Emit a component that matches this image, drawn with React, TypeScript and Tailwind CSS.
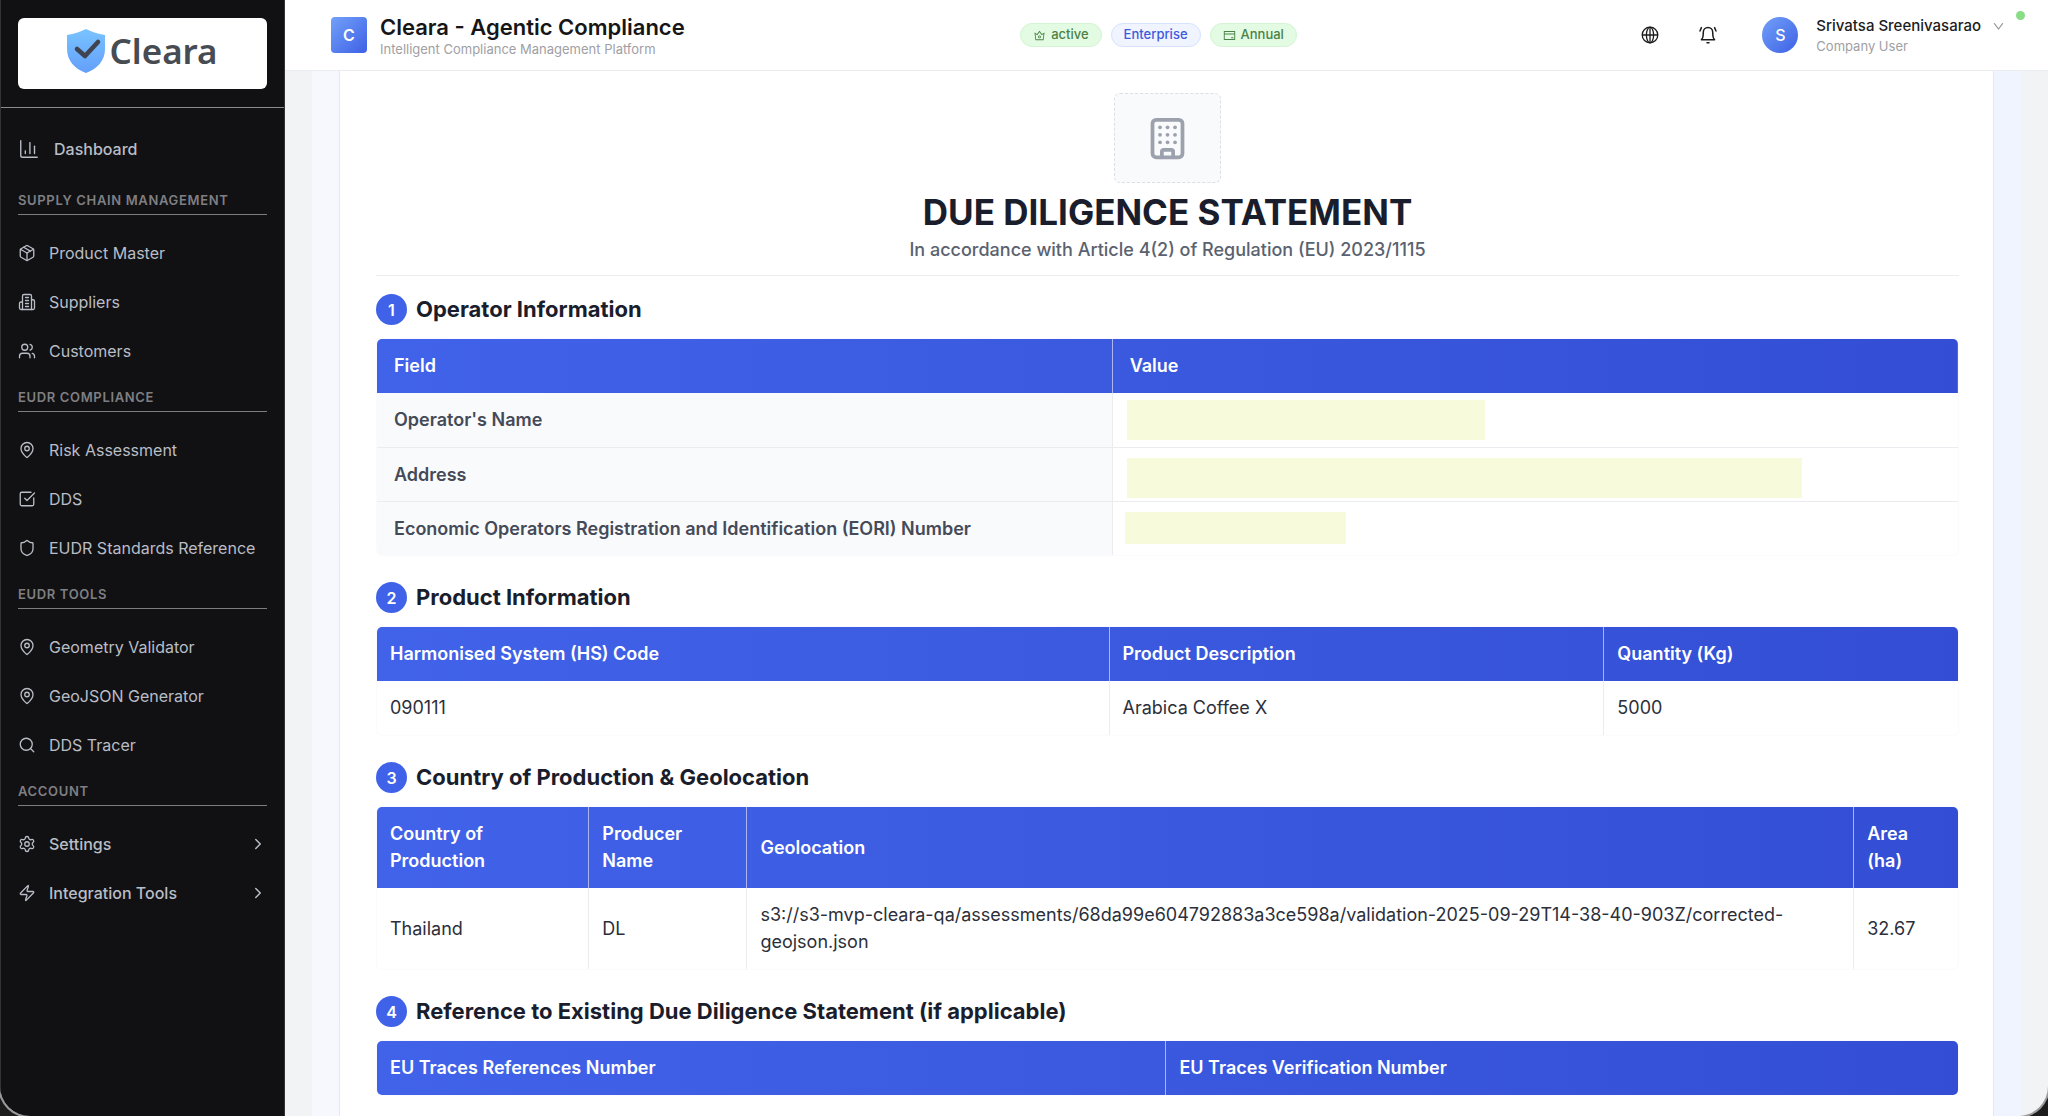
import React, { ReactNode } from 'react';
import {
    Building,
    ChartColumn,
    ChevronRight,
    MapPin,
    Package,
    Search,
    Settings,
    Shield,
    SquareCheckBig,
    Users,
    Zap
} from 'lucide-react';
import { AiOutlineCreditCard, AiOutlineCrown, AiOutlineDown } from 'react-icons/ai';

interface IconProps {
    className?: string;
    strokeWidth?: number | string;
}

interface NavItem {
    label: string;
    icon: React.ComponentType<IconProps>;
    expandable?: boolean;
}

interface NavSection {
    title: string;
    items: NavItem[];
}

// Office tower with two side wings
const OfficeIcon = ({ className, strokeWidth }: IconProps) => (
    <svg
        viewBox="0 0 24 24"
        className={className}
        fill="none"
        stroke="currentColor"
        strokeWidth={strokeWidth}
        strokeLinecap="round"
        strokeLinejoin="round"
        aria-hidden="true"
    >
        <path d="M6 22V4a2 2 0 0 1 2-2h8a2 2 0 0 1 2 2v18Z" />
        <path d="M6 12H4a2 2 0 0 0-2 2v6a2 2 0 0 0 2 2h2" />
        <path d="M18 9h2a2 2 0 0 1 2 2v9a2 2 0 0 1-2 2h-2" />
        <path d="M10 6h4M10 10h4M10 14h4M10 18h4" />
    </svg>
);

const navSections: NavSection[] = [
    {
        title: 'SUPPLY CHAIN MANAGEMENT',
        items: [
            { label: 'Product Master', icon: Package },
            { label: 'Suppliers', icon: OfficeIcon },
            { label: 'Customers', icon: Users }
        ]
    },
    {
        title: 'EUDR COMPLIANCE',
        items: [
            { label: 'Risk Assessment', icon: MapPin },
            { label: 'DDS', icon: SquareCheckBig },
            { label: 'EUDR Standards Reference', icon: Shield }
        ]
    },
    {
        title: 'EUDR TOOLS',
        items: [
            { label: 'Geometry Validator', icon: MapPin },
            { label: 'GeoJSON Generator', icon: MapPin },
            { label: 'DDS Tracer', icon: Search }
        ]
    },
    {
        title: 'ACCOUNT',
        items: [
            { label: 'Settings', icon: Settings, expandable: true },
            { label: 'Integration Tools', icon: Zap, expandable: true }
        ]
    }
];

const Logo = () => (
    <div className="flex h-[71px] items-center justify-center gap-1 rounded-md bg-white pb-[6px]">
        <svg viewBox="0 0 38 44" className="h-11 w-[38px]" aria-hidden="true">
            <defs>
                <linearGradient id="shield" x1="0" y1="0" x2="0" y2="1">
                    <stop offset="0" stopColor="#79c3fe" />
                    <stop offset="1" stopColor="#639ffb" />
                </linearGradient>
            </defs>
            <path d="M19 0 C25 3 31 5 38 6 V20 C38 32 30 40 19 44 C8 40 0 32 0 20 V6 C7 5 13 3 19 0Z" fill="url(#shield)" />
            <path d="M10 20 L18 27 L31 13" fill="none" stroke="#3f4450" strokeWidth="4.6" strokeLinecap="round" strokeLinejoin="round" />
        </svg>
        <span className="font-['Noto_Sans',sans-serif] text-[35px] leading-none font-semibold text-[#474b52]">Cleara</span>
    </div>
);

const Sidebar = () => (
    <aside className="flex w-[285px] shrink-0 flex-col border-x border-[#343437] bg-[#111113] text-[#b9bdc6]">
        <div className="border-b border-[#8b8b8e] px-[17px] py-[18px]">
            <Logo />
        </div>
        <nav className="flex flex-col gap-3 px-[17px] pt-4">
            <a href="#dashboard" className="mb-[5px] flex h-[49px] items-center gap-[14px] text-base font-medium">
                <ChartColumn className="h-[22px] w-[22px]" strokeWidth={1.5} />
                Dashboard
            </a>
            {navSections.map(section => (
                <section key={section.title}>
                    <h2 className="mb-[13px] border-b border-[#7d7d80] pb-1 text-[13px] leading-5 font-semibold tracking-wider text-[#7f7f83]">
                        {section.title}
                    </h2>
                    {section.items.map(({ label, icon: Icon, expandable }) =>
                        expandable ? (
                            <button key={label} type="button" className="flex h-[49px] w-full items-center gap-[13px] text-left text-base font-medium">
                                <Icon className="h-[18px] w-[18px]" strokeWidth={1.75} />
                                <span className="flex-1">{label}</span>
                                <ChevronRight className="h-[18px] w-[18px]" strokeWidth={2} />
                            </button>
                        ) : (
                            <a key={label} href="#page" className="flex h-[49px] items-center gap-[13px] text-base whitespace-nowrap">
                                <Icon className="h-[18px] w-[18px]" strokeWidth={1.75} />
                                {label}
                            </a>
                        )
                    )}
                </section>
            ))}
        </nav>
    </aside>
);

const pillStyles = {
    green: 'border-[#d3f5d3] bg-[#e3fbe3] text-[#4c8248]',
    blue: 'border-[#d6e2fd] bg-[#eff4ff] text-[#4059dc]'
};

const Pill = ({ tone, children }: { tone: keyof typeof pillStyles; children: ReactNode }) => (
    <span className={`flex h-6 items-center gap-[5px] rounded-full border px-3 text-[13px] font-medium ${pillStyles[tone]}`}>
        {children}
    </span>
);

const Header = () => (
    <header className="relative z-10 flex h-[71px] shrink-0 items-center justify-between border-b border-[#ebecef] bg-white pr-[43px] pl-[46px]">
        <div className="flex items-center gap-[13px]">
            <div className="flex h-9 w-9 items-center justify-center rounded bg-linear-to-br from-[#74a0f8] to-[#3f5fe5] text-base font-semibold text-white">
                C
            </div>
            <div>
                <h1 className="text-[22px] leading-7 font-semibold text-[#161618]">Cleara - Agentic Compliance</h1>
                <p className="text-[13px] leading-4 text-[#a0a0a4]">Intelligent Compliance Management Platform</p>
            </div>
        </div>
        <div className="flex items-center gap-[9px]">
            <Pill tone="green">
                <AiOutlineCrown className="h-[13px] w-[13px]" />
                active
            </Pill>
            <Pill tone="blue">Enterprise</Pill>
            <Pill tone="green">
                <AiOutlineCreditCard className="h-[13px] w-[13px]" />
                Annual
            </Pill>
        </div>
        <div className="flex items-center text-[#1c1c1e]">
            <button type="button" aria-label="Language" className="mr-[22px] flex h-9 w-9 items-center justify-center">
                <svg viewBox="0 0 18 18" className="h-[18px] w-[18px]" fill="none" stroke="currentColor" strokeWidth="1.3">
                    <circle cx="9" cy="9" r="7.8" />
                    <ellipse cx="9" cy="9" rx="3.6" ry="7.8" />
                    <path d="M1.2 9h15.6M9 1.2v15.6" />
                </svg>
            </button>
            <button type="button" aria-label="Notifications" className="mr-9 flex h-9 w-9 items-center justify-center">
                <svg viewBox="0 0 18 18" className="h-[18px] w-[18px]" fill="none" stroke="currentColor" strokeWidth="1.5" strokeLinecap="round" strokeLinejoin="round">
                    <path d="M2.4 13.8h13.2c-1-1.1-1.6-2.4-1.7-4l-.2-3.6a4.7 4.7 0 0 0-9.4 0l-.2 3.6c-.1 1.6-.7 2.9-1.7 4z" />
                    <path d="M8 16.8h2M2.4 1.6 1 5M15.6 1.6 17 5" />
                </svg>
            </button>
            <button type="button" className="flex items-center gap-[18px] text-left">
                <span className="flex h-9 w-9 items-center justify-center rounded-full bg-linear-to-br from-[#74a0f8] to-[#3f5fe5] text-base font-medium text-white">
                    S
                </span>
                <span className="pt-[2px]">
                    <span className="flex items-center gap-[11px] text-[15px] leading-5 font-medium">
                        Srivatsa Sreenivasarao
                        <AiOutlineDown className="h-[13px] w-[13px] text-[#8e8e93]" />
                    </span>
                    <span className="block text-[13px] leading-5 text-[#a0a0a4]">Company User</span>
                </span>
            </button>
        </div>
        <span className="absolute top-[11px] right-[23px] h-[9px] w-[9px] rounded-full bg-[#88dd86]" />
    </header>
);

const SectionTitle = ({ number, children }: { number: number; children: ReactNode }) => (
    <h3 className="mb-[13px] flex items-center gap-[9px] text-[22px] leading-[31px] font-bold text-[#1a1d2b]">
        <span className="flex h-[31px] w-[31px] items-center justify-center rounded-full bg-[#4062e8] text-base font-semibold text-white">
            {number}
        </span>
        {children}
    </h3>
);

interface DataTableProps {
    columns: string[];
    widths: string[];
    wide?: boolean;
    children?: ReactNode;
}

const DataTable = ({ columns, widths, wide, children }: DataTableProps) => (
    <div className="mb-[26px] overflow-hidden rounded-md border border-[#fbfbfe]">
        <table className="w-full table-fixed text-left text-[18px] leading-[27px]">
            <colgroup>
                {widths.map((width, i) => (
                    <col key={i} className={width} />
                ))}
            </colgroup>
            <thead className="bg-linear-to-r from-[#4163e9] to-[#334ed4] text-white">
                <tr>
                    {columns.map(column => (
                        <th
                            key={column}
                            scope="col"
                            className={`border-r border-[#a9b6ef] pt-[13px] pb-[14px] font-semibold last:border-r-0 ${wide ? 'px-[17px]' : 'px-[13px]'}`}
                        >
                            {column}
                        </th>
                    ))}
                </tr>
            </thead>
            <tbody>{children}</tbody>
        </table>
    </div>
);

const Cell = ({ children }: { children: ReactNode }) => (
    <td className="border-r border-[#ebecef] px-[13px] pt-[13px] pb-[14px] text-[#2c2f3a] last:border-r-0">{children}</td>
);

const operatorRows = [
    { field: "Operator's Name", cell: 'pl-[14px]', bar: 'h-10 w-[358px]' },
    { field: 'Address', cell: 'pl-[14px] pt-2', bar: 'h-10 w-[675px]' },
    { field: 'Economic Operators Registration and Identification (EORI) Number', cell: 'pl-3', bar: 'h-8 w-[221px]' }
];

const Statement = () => (
    <article className="border-x border-[#e6e8ed] bg-white pt-[22px] pr-[34px] pb-12 pl-9">
        <div className="mb-[18px] flex flex-col items-center border-b border-[#ebecef] pb-3 text-center">
            <div className="flex h-[90px] w-[107px] items-center justify-center rounded-md border border-dashed border-[#dcdfe4] bg-[#f9fafc]">
                <Building className="h-[45px] w-[45px] text-[#9ca1ad]" strokeWidth={2} />
            </div>
            <h2 className="mt-[9px] text-[35px] leading-10 font-bold text-[#1a1d2b]">DUE DILIGENCE STATEMENT</h2>
            <p className="mt-1 text-[18px] leading-[27px] font-medium text-[#5a6270]">
                In accordance with Article 4(2) of Regulation (EU) 2023/1115
            </p>
        </div>

        <SectionTitle number={1}>Operator Information</SectionTitle>
        <DataTable columns={['Field', 'Value']} widths={['w-[46.5%]', 'w-[53.5%]']} wide>
            {operatorRows.map(row => (
                <tr key={row.field} className="h-[54px] border-b border-[#ebecef] last:border-b-0">
                    <th scope="row" className="border-r border-[#ebecef] bg-[#f9fafc] px-[17px] font-semibold text-[#454a58]">
                        {row.field}
                    </th>
                    <td className={row.cell}>
                        <div className={`bg-[#f7fadb] ${row.bar}`} />
                    </td>
                </tr>
            ))}
        </DataTable>

        <SectionTitle number={2}>Product Information</SectionTitle>
        <DataTable
            columns={['Harmonised System (HS) Code', 'Product Description', 'Quantity (Kg)']}
            widths={['w-[46.3%]', 'w-[31.3%]', 'w-[22.4%]']}
        >
            <tr>
                <Cell>090111</Cell>
                <Cell>Arabica Coffee X</Cell>
                <Cell>5000</Cell>
            </tr>
        </DataTable>

        <SectionTitle number={3}>Country of Production &amp; Geolocation</SectionTitle>
        <DataTable
            columns={['Country of Production', 'Producer Name', 'Geolocation', 'Area (ha)']}
            widths={['w-[13.4%]', 'w-[10%]', 'w-[70%]', 'w-[6.6%]']}
        >
            <tr>
                <Cell>Thailand</Cell>
                <Cell>DL</Cell>
                <Cell>s3://s3-mvp-cleara-qa/assessments/68da99e604792883a3ce598a/validation-2025-09-29T14-38-40-903Z/corrected-geojson.json</Cell>
                <Cell>32.67</Cell>
            </tr>
        </DataTable>

        <SectionTitle number={4}>Reference to Existing Due Diligence Statement (if applicable)</SectionTitle>
        <DataTable columns={['EU Traces References Number', 'EU Traces Verification Number']} widths={['w-[49.9%]', 'w-[50.1%]']} />
    </article>
);

export default function App() {
    return (
        <div className="h-screen overflow-hidden bg-[#1c1c1c] font-[Inter,sans-serif]">
            <div className="flex h-full overflow-hidden rounded-b-[30px] bg-[#f2f3f5] shadow-[0_0_0_2px_#9a9a9c]">
                <Sidebar />
                <div className="flex min-w-0 flex-1 flex-col">
                    <Header />
                    <main className="flex-1 overflow-hidden px-[27px]">
                        <div className="min-h-full bg-linear-to-r from-[#f7f8fd] to-[#f0f4ff] px-[27px]">
                            <Statement />
                        </div>
                    </main>
                </div>
            </div>
        </div>
    );
}
